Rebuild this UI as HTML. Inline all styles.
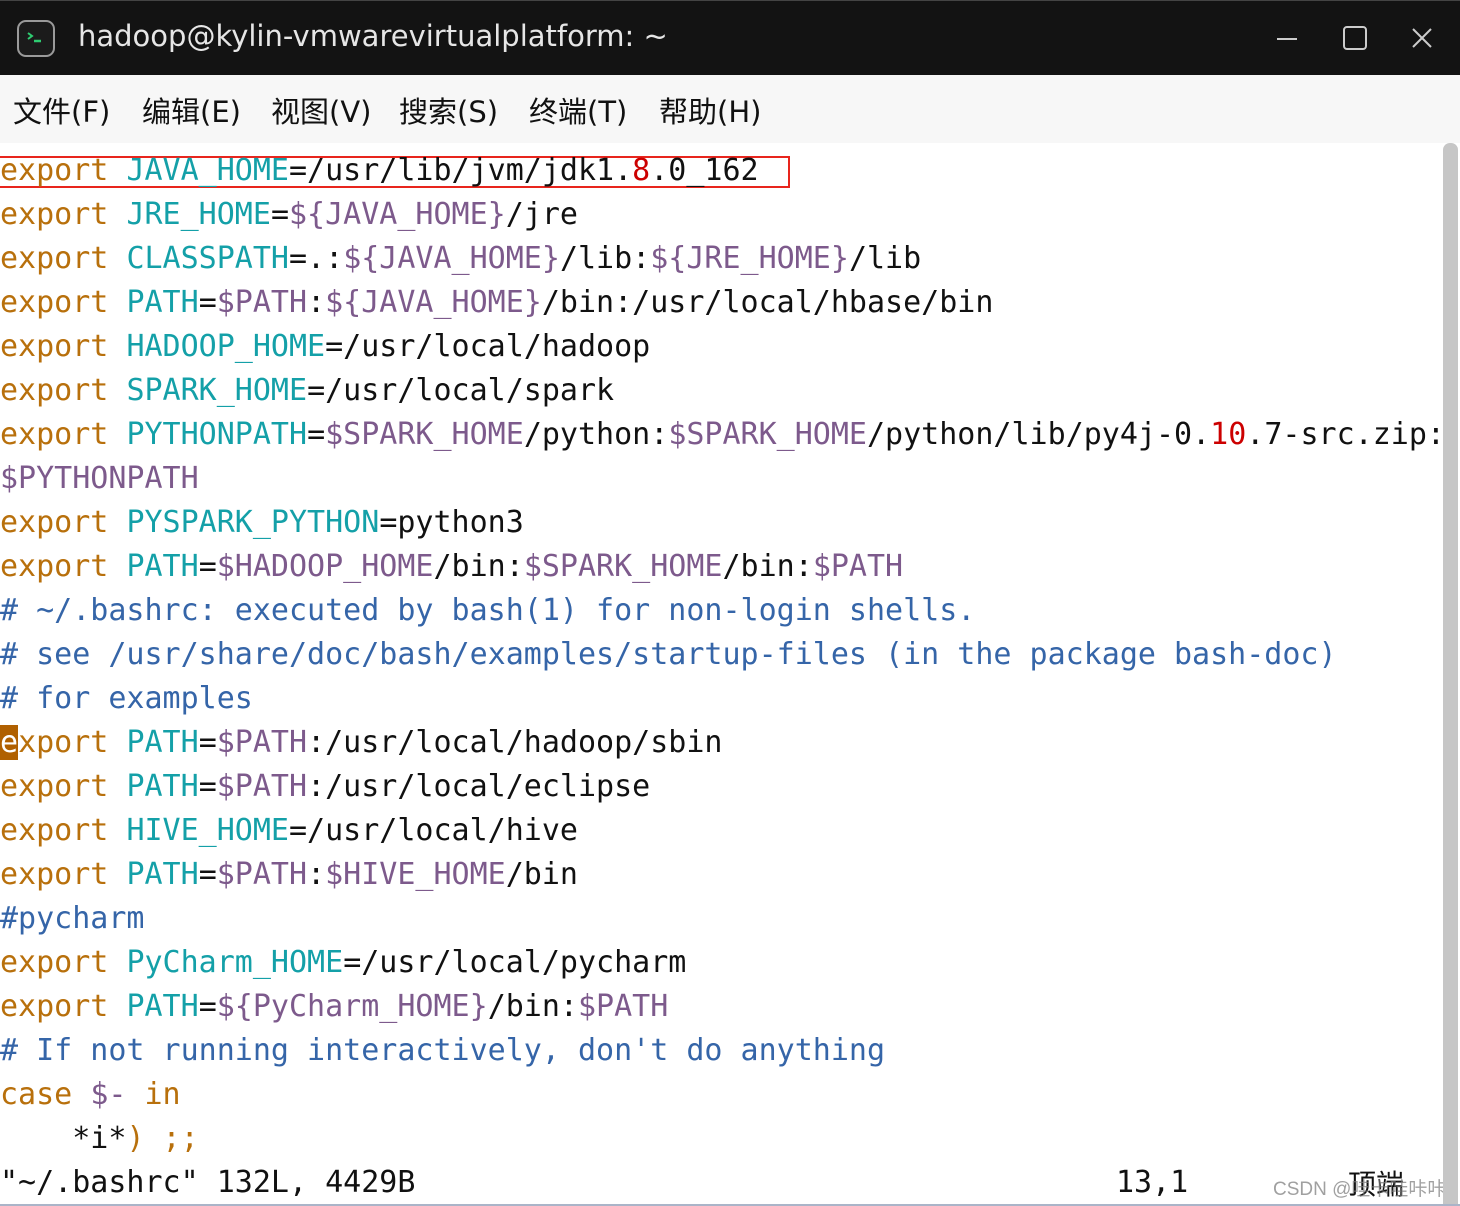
<!DOCTYPE html>
<html><head><meta charset="utf-8"><style>
body{margin:0;width:1460px;height:1206px;overflow:hidden;background:#fff;position:relative;font-family:"DejaVu Sans Mono","Liberation Mono",monospace}
#title{position:absolute;left:0;top:0;width:1460px;height:75px;background:#131313;border-top:1px solid #444;box-sizing:border-box}
#title .t{position:absolute;left:78px;top:18px;color:#e6e6e6;font:29px "DejaVu Sans","Liberation Sans",sans-serif}
#icon{position:absolute;left:17px;top:19px;width:38px;height:37px;border:2px solid #9a9a9a;border-radius:9px;background:#1b1b1b;box-sizing:border-box}
#menu{position:absolute;left:0;top:75px;width:1460px;height:68px;background:#f7f7f7}
#menu span{position:absolute;top:14px;font:29px "DejaVu Sans","Noto Sans CJK SC",sans-serif;color:#111}
.l{position:absolute;left:0;height:44px;line-height:44px;font-size:30px;white-space:pre;color:#111}
.o{color:#b8700c}.c{color:#14a0a8}.p{color:#7d5a8c}.b{color:#3565a8}.r{color:#cc0000}
#sb{position:absolute;left:1443px;top:143px;width:15px;height:1063px;background:#c6c6c6;border-radius:7px 7px 0 0}
</style></head><body>
<div id="title"><div id="icon"><svg width="34" height="33" viewBox="0 0 34 33"><path d="M9 11l4 3-4 3" stroke="#2ecc71" stroke-width="2" fill="none"/><path d="M15 19h7" stroke="#2ecc71" stroke-width="2.5"/></svg></div>
<div class="t">hadoop@kylin-vmwarevirtualplatform: ~</div>
<svg style="position:absolute;left:1270px;top:20px" width="180" height="36"><path d="M7 18h20" stroke="#ccc" stroke-width="2"/><rect x="74" y="6" width="22" height="22" rx="3" fill="none" stroke="#ccc" stroke-width="2"/><path d="M143 8l18 18M161 8l-18 18" stroke="#ccc" stroke-width="2"/></svg></div>
<div id="menu"><span style="left:13px">文件(F)</span><span style="left:142px">编辑(E)</span><span style="left:271px">视图(V)</span><span style="left:399px">搜索(S)</span><span style="left:529px">终端(T)</span><span style="left:659px">帮助(H)</span></div>
<div style="position:absolute;left:0;top:156px;width:790px;height:32px;border:2px solid #e8251d;border-left:none;box-sizing:border-box"></div>
<div class="l" style="top:149px"><span class="o">export</span> <span class="c">JAVA_HOME</span>=/usr/lib/jvm/jdk1.<span class="r">8</span>.0_162</div>
<div class="l" style="top:193px"><span class="o">export</span> <span class="c">JRE_HOME</span>=<span class="p">${JAVA_HOME}</span>/jre</div>
<div class="l" style="top:237px"><span class="o">export</span> <span class="c">CLASSPATH</span>=.:<span class="p">${JAVA_HOME}</span>/lib:<span class="p">${JRE_HOME}</span>/lib</div>
<div class="l" style="top:281px"><span class="o">export</span> <span class="c">PATH</span>=<span class="p">$PATH</span>:<span class="p">${JAVA_HOME}</span>/bin:/usr/local/hbase/bin</div>
<div class="l" style="top:325px"><span class="o">export</span> <span class="c">HADOOP_HOME</span>=/usr/local/hadoop</div>
<div class="l" style="top:369px"><span class="o">export</span> <span class="c">SPARK_HOME</span>=/usr/local/spark</div>
<div class="l" style="top:413px"><span class="o">export</span> <span class="c">PYTHONPATH</span>=<span class="p">$SPARK_HOME</span>/python:<span class="p">$SPARK_HOME</span>/python/lib/py4j-0.<span class="r">10</span>.7-src.zip:</div>
<div class="l" style="top:457px"><span class="p">$PYTHONPATH</span></div>
<div class="l" style="top:501px"><span class="o">export</span> <span class="c">PYSPARK_PYTHON</span>=python3</div>
<div class="l" style="top:545px"><span class="o">export</span> <span class="c">PATH</span>=<span class="p">$HADOOP_HOME</span>/bin:<span class="p">$SPARK_HOME</span>/bin:<span class="p">$PATH</span></div>
<div class="l b" style="top:589px"># ~/.bashrc: executed by bash(1) for non-login shells.</div>
<div class="l b" style="top:633px"># see /usr/share/doc/bash/examples/startup-files (in the package bash-doc)</div>
<div class="l b" style="top:677px"># for examples</div>
<div class="l" style="top:721px"><span style="background:#b06000;color:#fff">e</span><span class="o">xport</span> <span class="c">PATH</span>=<span class="p">$PATH</span>:/usr/local/hadoop/sbin</div>
<div class="l" style="top:765px"><span class="o">export</span> <span class="c">PATH</span>=<span class="p">$PATH</span>:/usr/local/eclipse</div>
<div class="l" style="top:809px"><span class="o">export</span> <span class="c">HIVE_HOME</span>=/usr/local/hive</div>
<div class="l" style="top:853px"><span class="o">export</span> <span class="c">PATH</span>=<span class="p">$PATH</span>:<span class="p">$HIVE_HOME</span>/bin</div>
<div class="l b" style="top:897px">#pycharm</div>
<div class="l" style="top:941px"><span class="o">export</span> <span class="c">PyCharm_HOME</span>=/usr/local/pycharm</div>
<div class="l" style="top:985px"><span class="o">export</span> <span class="c">PATH</span>=<span class="p">${PyCharm_HOME}</span>/bin:<span class="p">$PATH</span></div>
<div class="l b" style="top:1029px"># If not running interactively, don't do anything</div>
<div class="l" style="top:1073px"><span class="o">case</span> <span class="p">$-</span> <span class="o">in</span></div>
<div class="l" style="top:1117px">    *i*<span class="o">) ;;</span></div>
<div class="l" style="top:1161px">"~/.bashrc" 132L, 4429B</div>
<div class="l" style="top:1161px;left:1116px">13,1</div>
<div class="l" style="top:1161px;left:1348px;font-family:'Noto Sans CJK SC',sans-serif;font-size:28px">顶端</div>
<div style="position:absolute;left:1273px;top:1174px;font:19px 'Liberation Sans','Noto Sans CJK SC',sans-serif;color:rgba(120,120,120,0.7)">CSDN @哇卡哇咔咔</div>
<div id="sb"></div>
<div style="position:absolute;left:0;top:1204px;width:1460px;height:2px;background:#aab4c8"></div>
</body></html>
